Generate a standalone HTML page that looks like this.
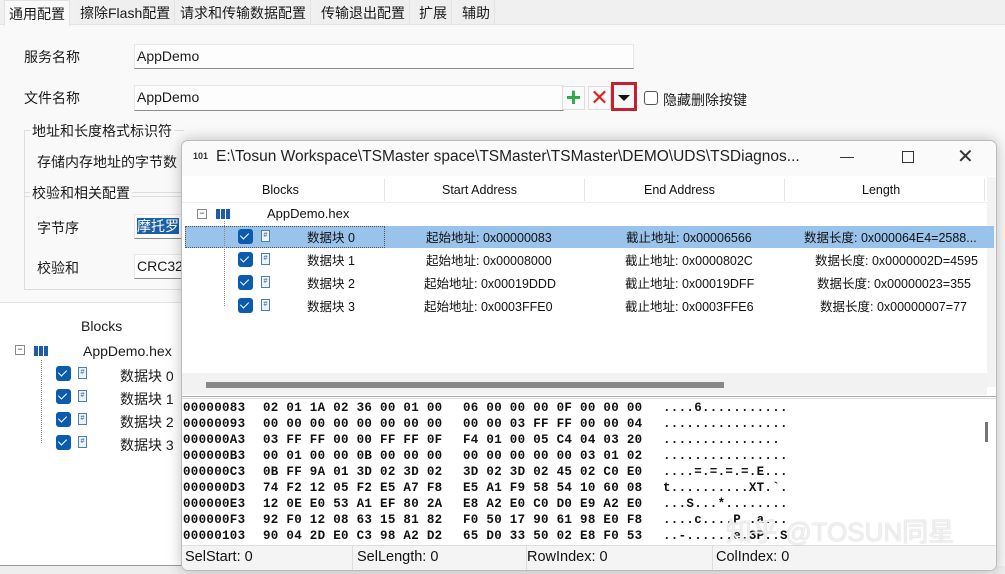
<!DOCTYPE html>
<html><head><meta charset="utf-8"><style>
*{margin:0;padding:0;box-sizing:border-box}
body{width:1005px;height:574px;overflow:hidden;background:#f9f9f9;position:relative;font-family:"Liberation Sans","Noto Sans CJK SC",sans-serif;font-size:14px;color:#1a1a1a}
.a{position:absolute;white-space:nowrap}
.tab{position:absolute;top:0;height:24px;line-height:26px;font-size:14px;padding:0 4px;background:#efefef;border-right:1px solid #e2e2e2}
.inp{position:absolute;background:#fdfdfd;border:1px solid #e6e6e6;border-bottom:1px solid #8a8a8a;font-size:14px;padding-left:2px;line-height:22px}
.cb{position:absolute;width:15px;height:15px;background:#0b5cad;border-radius:3px}
.cb:after{content:"";position:absolute;left:4px;top:2px;width:4px;height:7px;border:solid #fff;border-width:0 1.5px 1.5px 0;transform:rotate(45deg)}
.fi{position:absolute;width:9px;height:12px;border:1px solid #4a7fb0;background:#eef4fb;font-size:7px;line-height:10px;text-align:center;color:#2a5f90}
.grid{position:absolute;width:14px;height:10px;background:repeating-linear-gradient(90deg,#1e5aa8 0 4px,transparent 4px 5px)}
.hex{position:absolute;font-family:"Liberation Mono",monospace;font-weight:bold;font-size:12.5px;letter-spacing:0.3px;color:#111}
.col{position:absolute;font-size:12.5px;color:#111;white-space:nowrap}
</style></head><body>
<div class="a" style="left:0;top:0;width:1005px;height:25px;background:#f0f0f0;border-bottom:1px solid #e4e4e4"></div>
<div class="tab" style="left:4px;background:#f9f9f9;height:26px;border:1px solid #e2e2e2;border-bottom:none">通用配置</div>
<div class="tab" style="left:76px">擦除Flash配置</div>
<div class="tab" style="left:176px">请求和传输数据配置</div>
<div class="tab" style="left:317px">传输退出配置</div>
<div class="tab" style="left:415px">扩展</div>
<div class="tab" style="left:458px">辅助</div>

<div class="a" style="left:24px;top:47px">服务名称</div>
<div class="inp" style="left:134px;top:44px;width:500px;height:25px">AppDemo</div>
<div class="a" style="left:24px;top:88px">文件名称</div>
<div class="inp" style="left:134px;top:85px;width:430px;height:26px">AppDemo</div>
<div class="a" style="left:562px;top:86px;width:23px;height:24px;border:1px solid #ddd;background:#fafafa;color:#2aa84a;font-size:26px;line-height:20px;text-align:center;font-weight:bold">+</div>
<div class="a" style="left:588px;top:86px;width:23px;height:24px;border:1px solid #ddd;background:#fafafa;color:#d22;font-size:22px;line-height:22px;text-align:center">✕</div>
<div class="a" style="left:611px;top:82px;width:26px;height:29px;border:3px solid #c4202f;background:#f5f5f5"></div>
<div class="a" style="left:618px;top:95px;width:0;height:0;border-left:6px solid transparent;border-right:6px solid transparent;border-top:6px solid #111"></div>
<div class="a" style="left:644px;top:91px;width:14px;height:14px;border:1px solid #555;border-radius:3px;background:#fff"></div>
<div class="a" style="left:663px;top:90px">隐藏删除按键</div>

<div class="a" style="left:24px;top:130px;width:160px;height:67px;border:1px solid #ddd;border-right:none"></div>
<div class="a" style="left:30px;top:121px;background:#f9f9f9;padding:0 2px">地址和长度格式标识符</div>
<div class="a" style="left:37px;top:152px">存储内存地址的字节数</div>
<div class="a" style="left:24px;top:192px;width:160px;height:98px;border:1px solid #ddd;border-right:none"></div>
<div class="a" style="left:30px;top:183px;background:#f9f9f9;padding:0 2px">校验和相关配置</div>
<div class="a" style="left:37px;top:218px">字节序</div>
<div class="inp" style="left:134px;top:214px;width:50px;height:25px"><span style="background:#1a5fa8;color:#fff">摩托罗</span></div>
<div class="a" style="left:37px;top:258px">校验和</div>
<div class="inp" style="left:134px;top:254px;width:50px;height:25px">CRC32</div>

<div class="a" style="left:0;top:302px;width:185px;height:264px;background:#fff;border-top:1px solid #e4e4e4;border-bottom:1px solid #999"></div>
<div class="a" style="left:81px;top:318px">Blocks</div>
<div class="a" style="left:15px;top:345px;width:10px;height:10px;border:1px solid #888;background:#fff;font-size:9px;line-height:7px;text-align:center">−</div>
<div class="grid" style="left:34px;top:346px"></div>
<div class="a" style="left:83px;top:343px">AppDemo.hex</div>
<div class="a" style="left:41px;top:360px;height:83px;border-left:1px dotted #888"></div>
<div class="cb" style="left:56px;top:366px"></div><div class="fi" style="left:78px;top:367px">#</div><div class="a" style="left:120px;top:366px">数据块 0</div>
<div class="cb" style="left:56px;top:389px"></div><div class="fi" style="left:78px;top:390px">#</div><div class="a" style="left:120px;top:389px">数据块 1</div>
<div class="cb" style="left:56px;top:412px"></div><div class="fi" style="left:78px;top:413px">#</div><div class="a" style="left:120px;top:412px">数据块 2</div>
<div class="cb" style="left:56px;top:435px"></div><div class="fi" style="left:78px;top:436px">#</div><div class="a" style="left:120px;top:435px">数据块 3</div>
<div class="a" style="left:0;top:566px;width:1005px;height:8px;background:#eee"></div>

<div class="a" style="left:181px;top:140px;width:816px;height:431px;background:#fff;border:1px solid #bbb;border-radius:7px;box-shadow:0 0 14px rgba(0,0,0,.25);overflow:hidden">
 <div class="a" style="left:0;top:0;width:816px;height:35px;background:#fafafa"></div>
 <div class="a" style="left:11px;top:10px;font-size:9px;font-weight:bold;color:#333">101</div>
 <div class="a" style="left:34px;top:7px;font-size:15.5px;color:#222">E:\Tosun Workspace\TSMaster space\TSMaster\TSMaster\DEMO\UDS\TSDiagnos...</div>
 <div class="a" style="left:658px;top:16px;width:14px;border-top:1px solid #333"></div>
 <div class="a" style="left:720px;top:10px;width:12px;height:12px;border:1px solid #333"></div>
 <div class="a" style="left:775px;top:3px;font-size:20px;color:#333">✕</div>
 <div class="a" style="left:0;top:36px;width:805px;height:26px;background:#fff;border-bottom:1px solid #eee"></div>
 <div class="col" style="left:80px;top:42px">Blocks</div>
 <div class="a" style="left:202px;top:38px;height:22px;border-left:1px solid #e5e5e5"></div>
 <div class="col" style="left:260px;top:42px">Start Address</div>
 <div class="a" style="left:402px;top:38px;height:22px;border-left:1px solid #e5e5e5"></div>
 <div class="col" style="left:462px;top:42px">End Address</div>
 <div class="a" style="left:602px;top:38px;height:22px;border-left:1px solid #e5e5e5"></div>
 <div class="col" style="left:680px;top:42px">Length</div>
 <div class="a" style="left:802px;top:38px;height:22px;border-left:1px solid #e5e5e5"></div>
 <div class="a" style="left:805px;top:36px;width:11px;height:210px;background:#f3f3f3"></div>
 <div class="a" style="left:15px;top:68px;width:10px;height:10px;border:1px solid #888;font-size:9px;line-height:7px;text-align:center">−</div>
 <div class="grid" style="left:34px;top:68px"></div>
 <div class="col" style="left:85px;top:65px;font-size:13px">AppDemo.hex</div>
 <div class="a" style="left:3px;top:85px;width:809px;height:22px;background:#99c3ea"></div>
 <div class="a" style="left:3px;top:85px;width:200px;height:22px;border:1px dotted #555"></div>
 <div class="a" style="left:42px;top:80px;height:85px;border-left:1px dotted #888"></div>
 <div class="cb" style="left:56px;top:88px"></div><div class="fi" style="left:79px;top:89px">#</div><div class="col" style="left:125px;top:86px">数据块 0</div>
 <div class="col" style="left:244px;top:86px">起始地址: 0x00000083</div><div class="col" style="left:444px;top:86px">截止地址: 0x00006566</div><div class="col" style="left:622px;top:86px">数据长度: 0x000064E4=2588...</div>
 <div class="cb" style="left:56px;top:111px"></div><div class="fi" style="left:79px;top:112px">#</div><div class="col" style="left:125px;top:109px">数据块 1</div>
 <div class="col" style="left:244px;top:109px">起始地址: 0x00008000</div><div class="col" style="left:443px;top:109px">截止地址: 0x0000802C</div><div class="col" style="left:633px;top:109px">数据长度: 0x0000002D=4595</div>
 <div class="cb" style="left:56px;top:134px"></div><div class="fi" style="left:79px;top:135px">#</div><div class="col" style="left:125px;top:132px">数据块 2</div>
 <div class="col" style="left:242px;top:132px">起始地址: 0x00019DDD</div><div class="col" style="left:443px;top:132px">截止地址: 0x00019DFF</div><div class="col" style="left:635px;top:132px">数据长度: 0x00000023=355</div>
 <div class="cb" style="left:56px;top:157px"></div><div class="fi" style="left:79px;top:158px">#</div><div class="col" style="left:125px;top:155px">数据块 3</div>
 <div class="col" style="left:242px;top:155px">起始地址: 0x0003FFE0</div><div class="col" style="left:443px;top:155px">截止地址: 0x0003FFE6</div><div class="col" style="left:638px;top:155px">数据长度: 0x00000007=77</div>
 <div class="a" style="left:0;top:232px;width:805px;height:22px;background:#f2f2f2"></div>
 <div class="a" style="left:24px;top:241px;width:518px;height:6px;background:#888"></div>
 <div class="a" style="left:0;top:255px;width:816px;height:3px;border-top:1px solid #aaa;border-bottom:1px solid #ddd"></div>
 <div class="a" style="left:803px;top:281px;width:3px;height:20px;background:#777"></div>
 <div class="a" style="left:0;top:404px;width:816px;height:27px;background:#f4f4f4;border-top:1px solid #ddd"></div>
 <div class="col" style="left:3px;top:408px;font-size:14.5px">SelStart: 0</div>
 <div class="a" style="left:170px;top:405px;height:25px;border-left:1px solid #ddd"></div>
 <div class="col" style="left:175px;top:408px;font-size:14.5px">SelLength: 0</div>
 <div class="a" style="left:344px;top:405px;height:25px;border-left:1px solid #ddd"></div>
 <div class="col" style="left:345px;top:408px;font-size:14.5px">RowIndex: 0</div>
 <div class="a" style="left:530px;top:405px;height:25px;border-left:1px solid #ddd"></div>
 <div class="col" style="left:534px;top:408px;font-size:14.5px">ColIndex: 0</div>
</div>
<div class="a" style="left:183px;top:401px">
<div class="hex" style="left:0;top:0">00000083</div><div class="hex" style="left:80px;top:0">02 01 1A 02 36 00 01 00</div><div class="hex" style="left:280px;top:0">06 00 00 00 0F 00 00 00</div><div class="hex" style="left:480px;top:0">....6...........</div>
<div class="hex" style="left:0;top:16px">00000093</div><div class="hex" style="left:80px;top:16px">00 00 00 00 00 00 00 00</div><div class="hex" style="left:280px;top:16px">00 00 03 FF FF 00 00 04</div><div class="hex" style="left:480px;top:16px">................</div>
<div class="hex" style="left:0;top:32px">000000A3</div><div class="hex" style="left:80px;top:32px">03 FF FF 00 00 FF FF 0F</div><div class="hex" style="left:280px;top:32px">F4 01 00 05 C4 04 03 20</div><div class="hex" style="left:480px;top:32px">...............</div>
<div class="hex" style="left:0;top:48px">000000B3</div><div class="hex" style="left:80px;top:48px">00 01 00 00 0B 00 00 00</div><div class="hex" style="left:280px;top:48px">00 00 00 00 00 03 01 02</div><div class="hex" style="left:480px;top:48px">................</div>
<div class="hex" style="left:0;top:64px">000000C3</div><div class="hex" style="left:80px;top:64px">0B FF 9A 01 3D 02 3D 02</div><div class="hex" style="left:280px;top:64px">3D 02 3D 02 45 02 C0 E0</div><div class="hex" style="left:480px;top:64px">....=.=.=.=.E...</div>
<div class="hex" style="left:0;top:80px">000000D3</div><div class="hex" style="left:80px;top:80px">74 F2 12 05 F2 E5 A7 F8</div><div class="hex" style="left:280px;top:80px">E5 A1 F9 58 54 10 60 08</div><div class="hex" style="left:480px;top:80px">t..........XT.`.</div>
<div class="hex" style="left:0;top:96px">000000E3</div><div class="hex" style="left:80px;top:96px">12 0E E0 53 A1 EF 80 2A</div><div class="hex" style="left:280px;top:96px">E8 A2 E0 C0 D0 E9 A2 E0</div><div class="hex" style="left:480px;top:96px">...S...*........</div>
<div class="hex" style="left:0;top:112px">000000F3</div><div class="hex" style="left:80px;top:112px">92 F0 12 08 63 15 81 82</div><div class="hex" style="left:280px;top:112px">F0 50 17 90 61 98 E0 F8</div><div class="hex" style="left:480px;top:112px">....c....P..a...</div>
<div class="hex" style="left:0;top:128px">00000103</div><div class="hex" style="left:80px;top:128px">90 04 2D E0 C3 98 A2 D2</div><div class="hex" style="left:280px;top:128px">65 D0 33 50 02 E8 F0 53</div><div class="hex" style="left:480px;top:128px">..-......e.3P..S</div>
</div>
<div class="a" style="left:726px;top:512px;font-size:26px;color:rgba(255,255,255,.8);text-shadow:0 0 1px #aaa">知乎 @TOSUN同星</div>
</body></html>
